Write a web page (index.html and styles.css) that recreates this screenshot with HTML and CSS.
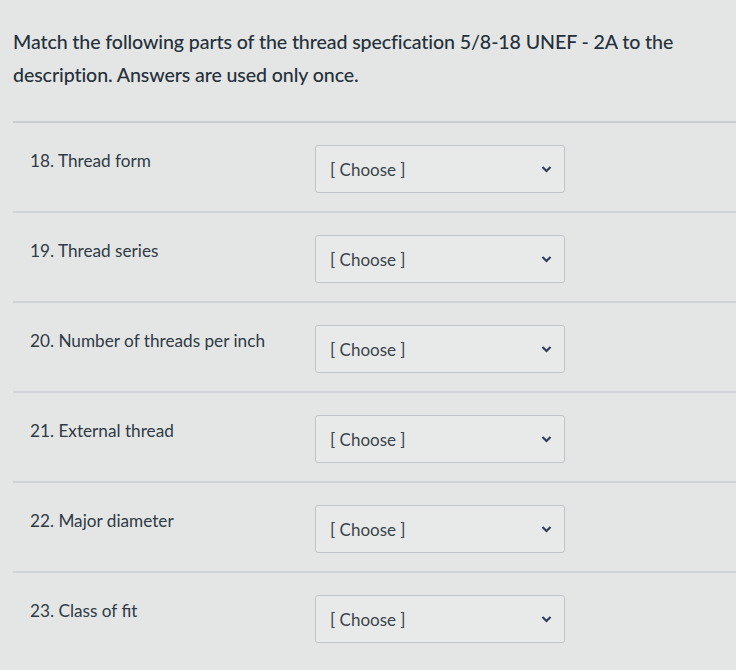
FILE: index.html
```html
<!DOCTYPE html>
<html>
    <head>
        <title>Quiz question</title>
        <link rel="stylesheet" href="styles.css">
    </head>
    <body>
        <div class="question">
            <p class="question_text">Match the following parts of the thread specfication 5/8-18 UNEF - 2A to the description. Answers are used only once.</p>

            <div class="answer_row">
                <div class="answer_label">18. Thread form</div>
                <div class="choose_box"><span>[ Choose ]</span><svg class="chevron" width="11" height="8" viewBox="0 0 11 8"><path d="M1.5 2 L5.5 6 L9.5 2" fill="none" stroke="#2d3b5a" stroke-width="2.2"/></svg></div>
            </div>

            <div class="answer_row">
                <div class="answer_label">19. Thread series</div>
                <div class="choose_box"><span>[ Choose ]</span><svg class="chevron" width="11" height="8" viewBox="0 0 11 8"><path d="M1.5 2 L5.5 6 L9.5 2" fill="none" stroke="#2d3b5a" stroke-width="2.2"/></svg></div>
            </div>

            <div class="answer_row">
                <div class="answer_label">20. Number of threads per inch</div>
                <div class="choose_box"><span>[ Choose ]</span><svg class="chevron" width="11" height="8" viewBox="0 0 11 8"><path d="M1.5 2 L5.5 6 L9.5 2" fill="none" stroke="#2d3b5a" stroke-width="2.2"/></svg></div>
            </div>

            <div class="answer_row">
                <div class="answer_label">21. External thread</div>
                <div class="choose_box"><span>[ Choose ]</span><svg class="chevron" width="11" height="8" viewBox="0 0 11 8"><path d="M1.5 2 L5.5 6 L9.5 2" fill="none" stroke="#2d3b5a" stroke-width="2.2"/></svg></div>
            </div>

            <div class="answer_row">
                <div class="answer_label">22. Major diameter</div>
                <div class="choose_box"><span>[ Choose ]</span><svg class="chevron" width="11" height="8" viewBox="0 0 11 8"><path d="M1.5 2 L5.5 6 L9.5 2" fill="none" stroke="#2d3b5a" stroke-width="2.2"/></svg></div>
            </div>

            <div class="answer_row">
                <div class="answer_label">23. Class of fit</div>
                <div class="choose_box"><span>[ Choose ]</span><svg class="chevron" width="11" height="8" viewBox="0 0 11 8"><path d="M1.5 2 L5.5 6 L9.5 2" fill="none" stroke="#2d3b5a" stroke-width="2.2"/></svg></div>
            </div>
        </div>
    </body>
</html>
```

FILE: styles.css
```css
body {
    margin: 0;
    background-color: #e4e6e6;
    font-family: Lato, "Open Sans", sans-serif;
    color: #2d3b45;
}

.question {
    padding-top: 25px;
    padding-left: 13px;
}

.question_text {
    margin: 0;
    padding-right: 30px;
    font-size: 19.6px;
    line-height: 33px;
    font-weight: 500;
    letter-spacing: -0.1px;
    color: #25303a;
    padding-bottom: 30px;
    border-bottom: 2px solid #c9cdd0;
}

.answer_row {
    display: flex;
    align-items: flex-start;
    padding: 22px 0 18px 17px;
    border-bottom: 2px solid #cfd3d5;
}

.answer_row:last-child {
    border-bottom: none;
}

.answer_label {
    width: 285px;
    padding-top: 5px;
    font-size: 17.2px;
    color: #2f3a44;
}

.choose_box {
    width: 222px;
    height: 46px;
    display: flex;
    align-items: center;
    justify-content: space-between;
    padding: 0 12px 0 14px;
    border: 1px solid #bfc4c7;
    border-radius: 3px;
    background-color: #e8eaea;
    font-size: 17px;
    color: #3a434b;
}

.chevron {
    margin-top: -1px;
}
```
